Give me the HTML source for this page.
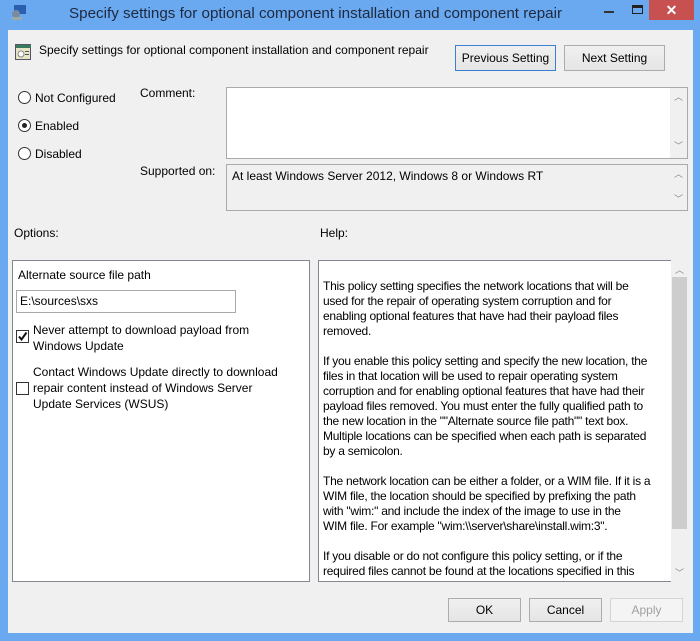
<!DOCTYPE html>
<html><head><style>
*{margin:0;padding:0;box-sizing:border-box}
body{width:700px;height:641px;background:#6aa8ef;font-family:"Liberation Sans",sans-serif;font-size:12px;color:#000;position:relative;overflow:hidden}
.a{position:absolute;white-space:nowrap}
.btn{position:absolute;border:1px solid #acacac;background:linear-gradient(#f0f0f0,#e5e5e5);text-align:center;font-size:12px}
.radio{position:absolute;width:13px;height:13px;border:1px solid #333;border-radius:50%;background:#fff}
.cb{position:absolute;width:13px;height:13px;border:1px solid #333;background:#fff}
.sb{position:absolute;width:17px;background:#f0f0f0;color:#888;font-size:9px;text-align:center}
</style></head><body>
<div class="a" style="left:8px;top:30px;width:685px;height:603px;background:#f0f0f0"></div>
<svg class="a" style="left:10px;top:3px" width="18" height="18"><rect x="4" y="2" width="12" height="9" fill="#2a5fb0"/><circle cx="6" cy="11" r="4" fill="#7a8aa0"/><rect x="2" y="14" width="10" height="3" fill="#9aa"/></svg>
<div class="a" style="left:69px;top:5px;font-size:15.2px;color:#1e2a40">Specify settings for optional component installation and component repair</div>
<div class="a" style="left:604px;top:4px;width:10px;height:9px;border-bottom:2px solid #333"></div>
<div class="a" style="left:632px;top:5px;width:11px;height:9px;border:1px solid #222;border-top:3px solid #222"></div>
<div class="a" style="left:649px;top:0;width:45px;height:20px;background:#c75050;color:#fff;text-align:center;font-size:14px;font-weight:bold;line-height:20px">✕</div>
<svg class="a" style="left:15px;top:44px" width="17" height="17"><rect x="0.5" y="0.5" width="15" height="15" fill="#e8e4c8" stroke="#556"/><rect x="1" y="1" width="15" height="3" fill="#3a7a60"/><circle cx="6" cy="10" r="3" fill="#fff" stroke="#888"/><rect x="10" y="7" width="4" height="1" fill="#555"/><rect x="10" y="10" width="4" height="1" fill="#555"/></svg>
<div class="a" style="left:39px;top:43px">Specify settings for optional component installation and component repair</div>
<div class="btn" style="left:455px;top:45px;width:101px;height:26px;line-height:24px;border-color:#3c7fd0">Previous Setting</div>
<div class="btn" style="left:564px;top:45px;width:101px;height:26px;line-height:24px">Next Setting</div>
<div class="radio" style="left:18px;top:91px"></div><div class="a" style="left:35px;top:91px">Not Configured</div>
<div class="radio" style="left:18px;top:119px"><div style="position:absolute;left:3px;top:3px;width:5px;height:5px;border-radius:50%;background:#222"></div></div><div class="a" style="left:35px;top:119px">Enabled</div>
<div class="radio" style="left:18px;top:147px"></div><div class="a" style="left:35px;top:147px">Disabled</div>
<div class="a" style="left:140px;top:86px">Comment:</div>
<div class="a" style="left:140px;top:164px">Supported on:</div>
<div class="a" style="left:226px;top:87px;width:462px;height:72px;border:1px solid #aaa;background:#fff"></div>
<div class="sb" style="left:670px;top:88px;height:70px"><div style="margin-top:2px">︿</div><div style="margin-top:36px">﹀</div></div>
<div class="a" style="left:226px;top:164px;width:462px;height:47px;border:1px solid #aaa;background:#f0f0f0"></div>
<div class="a" style="left:232px;top:169px">At least Windows Server 2012, Windows 8 or Windows RT</div>
<div class="sb" style="left:670px;top:165px;height:45px;background:#f0f0f0"><div style="margin-top:2px">︿</div><div style="margin-top:12px">﹀</div></div>
<div class="a" style="left:14px;top:226px">Options:</div>
<div class="a" style="left:320px;top:226px">Help:</div>
<div class="a" style="left:12px;top:260px;width:298px;height:322px;border:1px solid #828790;background:#fff"></div>
<div class="a" style="left:18px;top:268px">Alternate source file path</div>
<div class="a" style="left:16px;top:290px;width:220px;height:23px;border:1px solid #aaa;background:#fff;padding:3px 0 0 3px">E:\sources\sxs</div>
<div class="cb" style="left:16px;top:330px"><svg width="11" height="11" style="position:absolute;left:0;top:0"><path d="M2 5.5L4.5 8.5L9.5 1.5" stroke="#111" stroke-width="2" fill="none"/></svg></div>
<div class="a" style="left:33px;top:322px;line-height:16px">Never attempt to download payload from<br>Windows Update</div>
<div class="cb" style="left:16px;top:382px"></div>
<div class="a" style="left:33px;top:364px;line-height:16px">Contact Windows Update directly to download<br>repair content instead of Windows Server<br>Update Services (WSUS)</div>
<div class="a" style="left:318px;top:260px;width:354px;height:322px;border:1px solid #828790;background:#fff;overflow:hidden">
<div style="position:absolute;left:4px;top:18px;line-height:15px;white-space:nowrap;letter-spacing:-0.25px">This policy setting specifies the network locations that will be<br>used for the repair of operating system corruption and for<br>enabling optional features that have had their payload files<br>removed.<br><br>If you enable this policy setting and specify the new location, the<br>files in that location will be used to repair operating system<br>corruption and for enabling optional features that have had their<br>payload files removed. You must enter the fully qualified path to<br>the new location in the ""Alternate source file path"" text box.<br>Multiple locations can be specified when each path is separated<br>by a semicolon.<br><br>The network location can be either a folder, or a WIM file. If it is a<br>WIM file, the location should be specified by prefixing the path<br>with "wim:" and include the index of the image to use in the<br>WIM file. For example "wim:\\server\share\install.wim:3".<br><br>If you disable or do not configure this policy setting, or if the<br>required files cannot be found at the locations specified in this</div></div>
<div class="sb" style="left:671px;top:260px;height:322px"><div style="margin-top:3px">︿</div><div style="position:absolute;left:1px;top:17px;width:15px;height:252px;background:#cdcdcd"></div><div style="position:absolute;bottom:3px;width:17px">﹀</div></div>
<div class="btn" style="left:448px;top:598px;width:73px;height:24px;line-height:22px">OK</div>
<div class="btn" style="left:529px;top:598px;width:73px;height:24px;line-height:22px">Cancel</div>
<div class="btn" style="left:610px;top:598px;width:73px;height:24px;line-height:22px;color:#a0a0a0;border-color:#d5d5d5;background:#f4f4f4">Apply</div>
</body></html>
